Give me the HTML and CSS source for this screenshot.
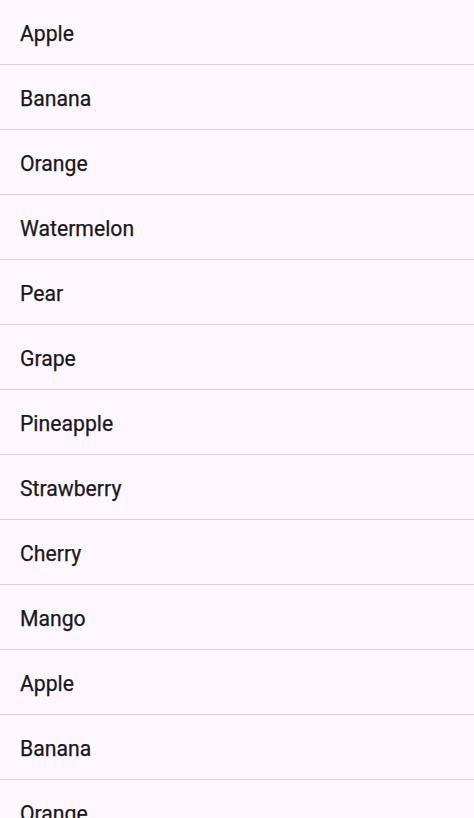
FILE: index.html
```html
<!DOCTYPE html>
<html>
<head>
<meta charset="utf-8">
<link rel="stylesheet" href="styles.css">
</head>
<body>
<ul class="list">
  <li class="item">Apple</li>
  <li class="item">Banana</li>
  <li class="item">Orange</li>
  <li class="item">Watermelon</li>
  <li class="item">Pear</li>
  <li class="item">Grape</li>
  <li class="item">Pineapple</li>
  <li class="item">Strawberry</li>
  <li class="item">Cherry</li>
  <li class="item">Mango</li>
  <li class="item">Apple</li>
  <li class="item">Banana</li>
  <li class="item">Orange</li>
</ul>
</body>
</html>
```
FILE: styles.css
```css
html, body {
  margin: 0;
  padding: 0;
  background: #fef7ff;
  overflow: hidden;
}
.list {
  list-style: none;
  margin: 0;
  padding: 0;
  font-family: Roboto, "Noto Sans", sans-serif;
}
.item {
  height: 62px;
  display: flex;
  align-items: center;
  padding: 2px 20px 0;
  font-size: 21.2px;
  font-weight: 400;
  color: #1a181d;
  border-bottom: 1px solid #d6d1da;
  box-sizing: content-box;
  -webkit-text-stroke: 0.25px #1a181d;
}
```
